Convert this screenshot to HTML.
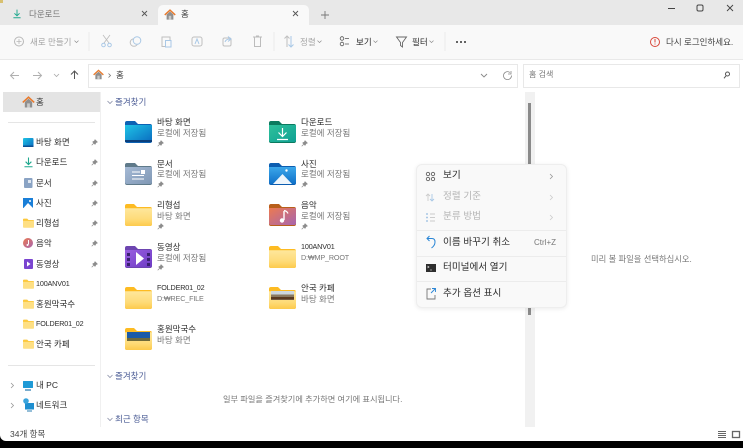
<!DOCTYPE html>
<html lang="ko"><head><meta charset="utf-8"><style>
html,body{margin:0;padding:0;background:#000;width:743px;height:448px;overflow:hidden}
#w{position:absolute;left:0;top:0;width:743px;height:441px;background:#fff;overflow:hidden;border-radius:0 0 0 6px;font-family:"Liberation Sans","Noto Sans CJK KR",sans-serif;font-size:8.5px;color:#2b2b2b;filter:blur(.35px)}
.a{position:absolute}
.t{position:absolute;white-space:nowrap;line-height:12px;transform:translateY(-6px)}
.g{color:#777}.d{color:#a5a5a5}.h{color:#4a5b94}
.l{font-size:7.2px;letter-spacing:-.15px}
.m{font-size:9.6px}
svg.o{position:absolute;left:0;top:0}
</style></head><body><div id="w">
<div class="a" style="left:0;top:0;width:743px;height:25px;background:#e8e8e8"></div>
<div class="a" style="left:0;top:0;width:3px;height:3px;background:#d8c070"></div>
<div class="a" style="left:158px;top:5px;width:151px;height:20px;background:#f9f9f9;border-radius:5px 5px 0 0"></div>
<div class="a" style="left:0;top:25px;width:743px;height:34px;background:#f9f9f9;border-bottom:1px solid #e9e9e9"></div>
<div class="a" style="left:88px;top:64px;width:428px;height:22px;border:1px solid #e8e8e8;background:#fff"></div>
<div class="a" style="left:523px;top:64px;width:215px;height:22px;border:1px solid #e8e8e8;background:#fff"></div>
<div class="a" style="left:3px;top:92px;width:97px;height:20px;background:#e4e4e4"></div>
<div class="a" style="left:8px;top:122px;width:87px;height:1px;background:#e5e5e5"></div>
<div class="a" style="left:8px;top:365px;width:87px;height:1px;background:#e5e5e5"></div>
<div class="a" style="left:100px;top:92px;width:1px;height:335px;background:#f0f0f0"></div>
<div class="a" style="left:525px;top:92px;width:10px;height:335px;background:#f1f1f1"></div>
<div class="a" style="left:528px;top:103px;width:3px;height:212px;background:#8a8a8a"></div>

<svg class="o" width="743" height="441" viewBox="0 0 743 441" fill="none">
<defs>
<linearGradient id="g0" x1="0" y1="0" x2="0" y2="1"><stop offset="0" stop-color="#fee79c"/><stop offset=".6" stop-color="#fedc7a"/><stop offset="1" stop-color="#fdca4c"/></linearGradient>
<symbol id="home" viewBox="0 0 14 13"><path d="M3 6.5V12.5H11V6.5L7 3Z" fill="#8f8f8f"/><rect x="5.5" y="8" width="3" height="4.5" fill="#c9c9c9"/><path d="M.8 7 7 1.3 13.2 7" stroke="#e8792b" stroke-width="1.7"/></symbol>
<symbol id="sf" viewBox="0 0 13 11"><path d="M0 1.2Q0 .3 1 .3H5L6.5 2H12Q13 2 13 3V10Q13 11 12 11H1Q0 11 0 10Z" fill="#fcc83c"/><path d="M0 3H13V10Q13 11 12 11H1Q0 11 0 10Z" fill="#fedf83"/></symbol>
<symbol id="bf" viewBox="0 0 27 22"><path d="M0 2Q0 0 2 0H9L12 3H25Q27 3 27 5V20Q27 22 25 22H2Q0 22 0 20Z" fill="#fdbb22"/><path d="M0 4.2H27V20Q27 22 25 22H2Q0 22 0 20Z" fill="url(#g0)"/></symbol>
<linearGradient id="g1" x1="0" y1="0" x2="1" y2="1"><stop offset="0" stop-color="#1fc4e6"/><stop offset="1" stop-color="#0a6cc0"/></linearGradient>
<linearGradient id="g2" x1="0" y1="0" x2="1" y2="1"><stop offset="0" stop-color="#2ec19b"/><stop offset="1" stop-color="#0fa093"/></linearGradient>
<linearGradient id="g3" x1="0" y1="0" x2="1" y2="1"><stop offset="0" stop-color="#a5bad5"/><stop offset="1" stop-color="#7f97b4"/></linearGradient>
<linearGradient id="g4" x1="0" y1="0" x2="0" y2="1"><stop offset="0" stop-color="#3ba7ea"/><stop offset="1" stop-color="#0f70c8"/></linearGradient>
<linearGradient id="g5" x1="0" y1="0" x2="1" y2="1"><stop offset="0" stop-color="#ec7a50"/><stop offset="1" stop-color="#a765b0"/></linearGradient>
<linearGradient id="g6" x1="0" y1="0" x2="1" y2="1"><stop offset="0" stop-color="#9a5fe0"/><stop offset="1" stop-color="#6d3bc4"/></linearGradient>
<symbol id="pin" viewBox="0 0 8 8"><path d="M4.6.8 7.2 3.4 5.8 4 4.6 6 2 3.4 4 2.2ZM3 5 .8 7.2" fill="#8c8c8c" stroke="#8c8c8c" stroke-width=".8"/></symbol>
<symbol id="dl" viewBox="0 0 10 11"><path d="M5 0V7.5M1.8 4.6 5 7.8 8.2 4.6M.5 10.2H9.5" stroke="#1fa88e" stroke-width="1.2"/></symbol>
<symbol id="chev" viewBox="0 0 6 4"><path d="M.6.6 3 3 5.4.6" stroke="#8a8a8a" stroke-width=".8"/></symbol>
</defs>

<!-- tabs -->
<use href="#dl" x="13" y="9" width="8" height="10"/>
<path d="M142 11l5 5M147 11l-5 5M293 11l5 5M298 11l-5 5" stroke="#555" stroke-width=".9"/>
<use href="#home" x="164" y="9" width="12" height="11"/>
<path d="M321 15h8M325 11v8" stroke="#777" stroke-width=".9"/>
<path d="M668 8.500h7" stroke="#444" stroke-width="1"/>
<rect x="697" y="5" width="6" height="6" rx="1.500" stroke="#444"/>
<path d="M727 5l6 6M733 5l-6 6" stroke="#444" stroke-width=".9"/>

<!-- toolbar -->
<circle cx="19" cy="41.500" r="4.500" stroke="#b8b8b8"/><path d="M16.500 41.500h5M19 39v5" stroke="#b8b8b8" stroke-width=".8"/>
<use href="#chev" x="74" y="40" width="5" height="3.500"/>
<path d="M89 32v19M274 32v19M445 32v19" stroke="#ebebeb"/>
<path d="M103 35l6 8M110 35l-6 8" stroke="#bcbcbc" stroke-width=".8"/><circle cx="103.500" cy="45" r="1.800" stroke="#a9c8e6"/><circle cx="109.500" cy="45" r="1.800" stroke="#a9c8e6"/>
<circle cx="134" cy="42.500" r="3.800" stroke="#c0c0c0"/><circle cx="137" cy="40.500" r="3.800" stroke="#a9c8e6" fill="#f9f9f9"/>
<rect x="162" y="37" width="8" height="9.500" stroke="#c0c0c0"/><rect x="165.500" y="40.500" width="5.500" height="6.500" stroke="#a9c8e6" fill="#f9f9f9"/>
<rect x="192" y="37" width="10" height="9" rx="2" stroke="#c0c0c0"/><path d="M195 44l2-5 2 5" stroke="#a9c8e6"/>
<rect x="223" y="38" width="8" height="8" rx="1.500" stroke="#c0c0c0"/><path d="M225 42q1-3 5-3M228 36.500l3 2.500-3 2.500" stroke="#a9c8e6"/>
<path d="M253 37h9M254.500 37v9.500h6V37M256 36h3" stroke="#bcbcbc"/>
<path d="M287 47V36M284.500 38.500 287 36l2.500 2.500" stroke="#c0c0c0"/><path d="M291 36v11M288.500 44.500 291 47l2.500-2.500" stroke="#a9c8e6"/>
<use href="#chev" x="317" y="40" width="5" height="3.500"/>
<circle cx="342" cy="38.500" r="1.800" stroke="#555" stroke-width=".8"/><circle cx="342" cy="44" r="1.800" stroke="#555" stroke-width=".8"/><path d="M345 38.500h4M345 44h4" stroke="#555" stroke-width=".8"/>
<use href="#chev" x="373" y="40" width="5" height="3.500"/>
<path d="M396.500 37h10L402.500 42.500V47L400.500 45.500V42.500Z" stroke="#666" stroke-width=".9"/>
<use href="#chev" x="429" y="40" width="5" height="3.500"/>
<circle cx="457" cy="42" r="1" fill="#333"/><circle cx="461" cy="42" r="1" fill="#333"/><circle cx="465" cy="42" r="1" fill="#333"/>
<circle cx="655" cy="42" r="4.500" stroke="#d9483b"/><path d="M655 39v3.500M655 43.500v1" stroke="#d9483b"/>

<!-- nav -->
<path d="M19 75.500h-8M14 72l-3.500 3.500L14 79" stroke="#b0b0b0"/>
<path d="M33 75.500h8M38 72l3.500 3.500L38 79" stroke="#b0b0b0"/>
<path d="M54 74l2.500 2.500L59 74" stroke="#aaa" stroke-width=".8"/>
<path d="M74.500 79v-8M71 74.500l3.500-3.500L78 74.500" stroke="#555"/>
<use href="#home" x="93" y="69" width="11" height="11"/>
<path d="M108.500 73.500l2 2-2 2" stroke="#777" stroke-width=".8"/>
<path d="M481 74l3 3 3-3" stroke="#888" stroke-width=".9"/>
<path d="M510 72.500a4 4 0 1 0 1.500 3M511 71v3h-3" stroke="#888" stroke-width=".8"/>
<circle cx="727.500" cy="74" r="2" stroke="#555"/><path d="M726 75.800l-2 2.500" stroke="#555"/>

<!-- sidebar icons -->
<use href="#home" x="22" y="96" width="13" height="12"/>
<rect x="23" y="138" width="10.500" height="9" rx="1" fill="url(#g1)"/><rect x="23" y="145.500" width="10.500" height="1.500" fill="#0c4f94"/>
<use href="#dl" x="24" y="157" width="9" height="11"/>
<rect x="24" y="178" width="8.500" height="10" rx="1" fill="#8aa3c4"/><rect x="28" y="180" width="3" height="3" fill="#dfe7f1"/>
<rect x="23" y="198" width="10" height="10" fill="#1a7fd8"/><path d="M23.500 208l4.500-5 5 5Z" fill="#fff"/><circle cx="30" cy="201" r="1" fill="#fff"/>
<use href="#sf" x="23" y="218" width="11" height="10"/>
<circle cx="28" cy="243" r="5" fill="url(#g5)"/><path d="M28.500 240v4.500" stroke="#fff"/><circle cx="27.500" cy="245" r="1" fill="#fff"/>
<rect x="24" y="259" width="9" height="10" rx="1" fill="#7a45d0"/><path d="M27 261.500l3.500 2.500-3.500 2.500Z" fill="#fff"/>
<use href="#sf" x="23" y="279" width="11" height="10"/>
<use href="#sf" x="23" y="299" width="11" height="10"/>
<use href="#sf" x="23" y="319" width="11" height="10"/>
<use href="#sf" x="23" y="339" width="11" height="10"/>
<g id="pins"><use href="#pin" x="91" y="139" width="7" height="7"/><use href="#pin" x="91" y="159" width="7" height="7"/><use href="#pin" x="91" y="180" width="7" height="7"/><use href="#pin" x="91" y="200" width="7" height="7"/><use href="#pin" x="91" y="220" width="7" height="7"/><use href="#pin" x="91" y="240" width="7" height="7"/><use href="#pin" x="91" y="261" width="7" height="7"/></g>
<path d="M11 383l2.500 2.500-2.500 2.500M11 403l2.500 2.500-2.500 2.500" stroke="#999" stroke-width=".8"/>
<rect x="23" y="381" width="10" height="7" rx=".5" fill="#1f9ad6"/><path d="M25 390h6" stroke="#2a7cb0" stroke-width="1.200"/>
<rect x="25" y="403" width="9" height="6.500" fill="#1f8fd0"/><path d="M27 411h5" stroke="#2a7cb0"/><circle cx="26" cy="401" r="2.800" fill="#3aa4dc"/>

<!-- section chevrons -->
<path d="M107.500 101l2.500 2.500 2.500-2.500M107.500 375l2.500 2.500 2.500-2.500M107.500 418l2.500 2.500 2.500-2.500" stroke="#8a8fa8" stroke-width=".8"/>

<!-- big icons -->
<g><path d="M125 123q0-2 2-2h8l3 3h12q2 0 2 2v15q0 2-2 2h-23q-2 0-2-2Z" fill="#0c62b4"/><path d="M125 125h27v15q0 2-2 2h-23q-2 0-2-2Z" fill="url(#g1)"/><rect x="125" y="140" width="27" height="2" fill="#0a3f7c"/></g>
<g><path d="M269 123q0-2 2-2h8l3 3h12q2 0 2 2v15q0 2-2 2h-23q-2 0-2-2Z" fill="#0b7a5f"/><path d="M269 125h27v15q0 2-2 2h-23q-2 0-2-2Z" fill="url(#g2)"/><path d="M282.500 128v8M278.500 132.500l4 4 4-4M277 139.500h11" stroke="#fff" stroke-width="1.200"/></g>
<g><path d="M125 165q0-2 2-2h8l3 3h12q2 0 2 2v15q0 2-2 2h-23q-2 0-2-2Z" fill="#5f7a8a"/><path d="M125 167h27v15q0 2-2 2h-23q-2 0-2-2Z" fill="url(#g3)"/><path d="M132 172h8M132 175.500h12M132 179h12" stroke="#fff"/><rect x="141" y="170" width="4" height="4" fill="#fff"/></g>
<g><path d="M269 165q0-2 2-2h8l3 3h12q2 0 2 2v15q0 2-2 2h-23q-2 0-2-2Z" fill="#0c5db0"/><path d="M269 167h27v15q0 2-2 2h-23q-2 0-2-2Z" fill="url(#g4)"/><path d="M273 184l9.500-10 9.500 10Z" fill="#eef5fb"/><circle cx="286.500" cy="170.500" r="1.200" fill="#fff"/></g>
<use href="#bf" x="125" y="204" width="27" height="22"/>
<g><path d="M269 206q0-2 2-2h8l3 3h12q2 0 2 2v15q0 2-2 2h-23q-2 0-2-2Z" fill="#b85f1a"/><path d="M269 208h27v15q0 2-2 2h-23q-2 0-2-2Z" fill="url(#g5)"/><path d="M284 211v9" stroke="#fff" stroke-width="1.400"/><path d="M284 210.500q3 .5 4 3" stroke="#fff" stroke-width="1.200"/><circle cx="282" cy="220.500" r="2.200" fill="#fff"/></g>
<g><path d="M125 248q0-2 2-2h8l3 3h12q2 0 2 2v15q0 2-2 2h-23q-2 0-2-2Z" fill="#6d45b0"/><path d="M125 250h27v15q0 2-2 2h-23q-2 0-2-2Z" fill="url(#g6)"/><path d="M136 252l8 6.500-8 6.500Z" fill="#fff"/><path d="M127 253h3v3h-3ZM127 258h3v3h-3ZM127 263h3v3h-3ZM147 253h3v3h-3ZM147 258h3v3h-3ZM147 263h3v3h-3Z" fill="#3a2070"/></g>
<use href="#bf" x="269" y="246" width="27" height="22"/>
<use href="#bf" x="125" y="287" width="27" height="22"/>
<use href="#bf" x="269" y="287" width="27" height="22"/>
<rect x="271" y="291" width="23" height="9" fill="#8a7a60"/><rect x="271" y="291" width="23" height="3.500" fill="#cdd8de"/><rect x="271" y="297" width="23" height="2.500" fill="#5a3a20"/>
<use href="#bf" x="125" y="328" width="27" height="22"/>
<rect x="127" y="332" width="23" height="9" fill="#1a5aa8"/><rect x="127" y="338" width="23" height="3" fill="#6f6a3a"/>

<!-- status -->
<g fill="#666"><rect x="718" y="431" width="8" height="1"/><rect x="718" y="433" width="8" height="1"/><rect x="718" y="435" width="8" height="1"/><rect x="718" y="437" width="8" height="1"/></g>
<rect x="732.500" y="431.500" width="7" height="6" stroke="#666" stroke-width="1.300"/>
</svg>

<!-- tab + toolbar text -->
<div class="t g" style="left:29px;top:14px">다운로드</div>
<div class="t" style="left:181px;top:14px">홈</div>
<div class="t d" style="left:30px;top:42px">새로 만들기</div>
<div class="t d" style="left:300px;top:42px">정렬</div>
<div class="t" style="left:356px;top:42px">보기</div>
<div class="t" style="left:412px;top:42px">필터</div>
<div class="t" style="left:666px;top:42px;color:#444">다시 로그인하세요.</div>
<div class="t" style="left:116px;top:75px">홈</div>
<div class="t g" style="left:529px;top:75px;font-size:8px">홈 검색</div>

<!-- sidebar text -->
<div class="t" style="left:36px;top:102px">홈</div>
<div class="t" style="left:36px;top:142px">바탕 화면</div>
<div class="t" style="left:36px;top:162px">다운로드</div>
<div class="t" style="left:36px;top:183px">문서</div>
<div class="t" style="left:36px;top:203px">사진</div>
<div class="t" style="left:36px;top:223px">리형섭</div>
<div class="t" style="left:36px;top:243px">음악</div>
<div class="t" style="left:36px;top:264px">동영상</div>
<div class="t l" style="left:36px;top:284px">100ANV01</div>
<div class="t" style="left:36px;top:304px">홍원막국수</div>
<div class="t l" style="left:36px;top:324px">FOLDER01_02</div>
<div class="t" style="left:36px;top:344px">안국 카페</div>
<div class="t" style="left:36px;top:385px">내 PC</div>
<div class="t" style="left:36px;top:405px">네트워크</div>
<div class="t" style="left:10px;top:434px;color:#444">34개 항목</div>

<!-- content text -->
<div class="t h" style="left:115px;top:102px">즐겨찾기</div>
<div class="t h" style="left:115px;top:376px">즐겨찾기</div>
<div class="t h" style="left:115px;top:419px">최근 항목</div>
<div class="t g" style="left:223px;top:400px;font-size:8.2px">일부 파일을 즐겨찾기에 추가하면 여기에 표시됩니다.</div>

<div class="t" style="left:157px;top:122px">바탕 화면</div><div class="t g" style="left:157px;top:133px">로컬에 저장됨</div>
<div class="t" style="left:301px;top:122px">다운로드</div><div class="t g" style="left:301px;top:133px">로컬에 저장됨</div>
<div class="t" style="left:157px;top:164px">문서</div><div class="t g" style="left:157px;top:174px">로컬에 저장됨</div>
<div class="t" style="left:301px;top:164px">사진</div><div class="t g" style="left:301px;top:174px">로컬에 저장됨</div>
<div class="t" style="left:157px;top:205px">리형섭</div><div class="t g" style="left:157px;top:216px">바탕 화면</div>
<div class="t" style="left:301px;top:205px">음악</div><div class="t g" style="left:301px;top:216px">로컬에 저장됨</div>
<div class="t" style="left:157px;top:247px">동영상</div><div class="t g" style="left:157px;top:258px">로컬에 저장됨</div>
<div class="t l" style="left:301px;top:247px">100ANV01</div><div class="t g l" style="left:301px;top:258px">D:₩MP_ROOT</div>
<div class="t l" style="left:157px;top:288px">FOLDER01_02</div><div class="t g l" style="left:157px;top:299px">D:₩REC_FILE</div>
<div class="t" style="left:301px;top:288px">안국 카페</div><div class="t g" style="left:301px;top:299px">바탕 화면</div>
<div class="t" style="left:157px;top:329px">홍원막국수</div><div class="t g" style="left:157px;top:340px">바탕 화면</div>
<svg class="o" width="743" height="441" viewBox="0 0 743 441">
<use href="#pin" x="157" y="140" width="7" height="7"/><use href="#pin" x="301" y="140" width="7" height="7"/>
<use href="#pin" x="157" y="181" width="7" height="7"/><use href="#pin" x="301" y="181" width="7" height="7"/>
<use href="#pin" x="157" y="223" width="7" height="7"/><use href="#pin" x="301" y="223" width="7" height="7"/>
<use href="#pin" x="157" y="264" width="7" height="7"/>
</svg>
<div class="t g" style="left:591px;top:259px;font-size:8.3px">미리 볼 파일을 선택하십시오.</div>

<!-- context menu -->
<div class="a" style="left:416px;top:164px;width:149px;height:142px;background:#f9f9f9;border:1px solid #eee;border-radius:6px;box-shadow:0 1px 4px rgba(0,0,0,.08)"></div>
<div class="a" style="left:417px;top:230px;width:149px;height:1px;background:#ececec"></div>
<div class="a" style="left:417px;top:256px;width:149px;height:1px;background:#ececec"></div>
<div class="a" style="left:417px;top:281px;width:149px;height:1px;background:#ececec"></div>
<svg class="o" width="743" height="441" viewBox="0 0 743 441" fill="none">
<g stroke="#666" stroke-width=".9"><circle cx="428" cy="174" r="1.700"/><circle cx="433" cy="174" r="1.700"/><circle cx="428" cy="179" r="1.700"/><circle cx="433" cy="179" r="1.700"/></g>
<path d="M428 201v-7M426 196l2-2 2 2" stroke="#ccc" stroke-width=".9"/><path d="M432 194v7M430 199l2 2 2-2" stroke="#a9c8e6" stroke-width=".9"/>
<path d="M426 214h2M426 217.500h2M426 221h2" stroke="#a9c8e6" stroke-width="1.500"/><path d="M430 214h5M430 217.500h5M430 221h5" stroke="#ccc"/>
<path d="M427 238.500h5q3 0 3 3.500t-3.500 6M429.500 236l-2.500 2.500 2.500 2.500" stroke="#2a86d6"/>
<rect x="426" y="264" width="10" height="8" fill="#2e2e2e"/><path d="M427.500 266l1.500 1-1.500 1M430 270h2" stroke="#fff" stroke-width=".6"/>
<path d="M431 289h-4v10h8v-4" stroke="#777" stroke-width=".9"/><path d="M431 293l4-4M432 288.500h3.500V292" stroke="#2a86d6" stroke-width=".9"/>
<path d="M550 174l2.500 2.500L550 179" stroke="#999" stroke-width=".8"/><path d="M550 195l2.500 2.500L550 200M550 215l2.500 2.500L550 220" stroke="#ccc" stroke-width=".8"/>
</svg>
<div class="t m" style="left:443px;top:176px">보기</div>
<div class="t m" style="left:443px;top:197px;color:#b5b5b5">정렬 기준</div>
<div class="t m" style="left:443px;top:217px;color:#b5b5b5">분류 방법</div>
<div class="t m" style="left:443px;top:243px">이름 바꾸기 취소</div>
<div class="t g" style="left:534px;top:243px;font-size:8px">Ctrl+Z</div>
<div class="t m" style="left:443px;top:268px">터미널에서 열기</div>
<div class="t m" style="left:443px;top:294px">추가 옵션 표시</div>
</div></body></html>
